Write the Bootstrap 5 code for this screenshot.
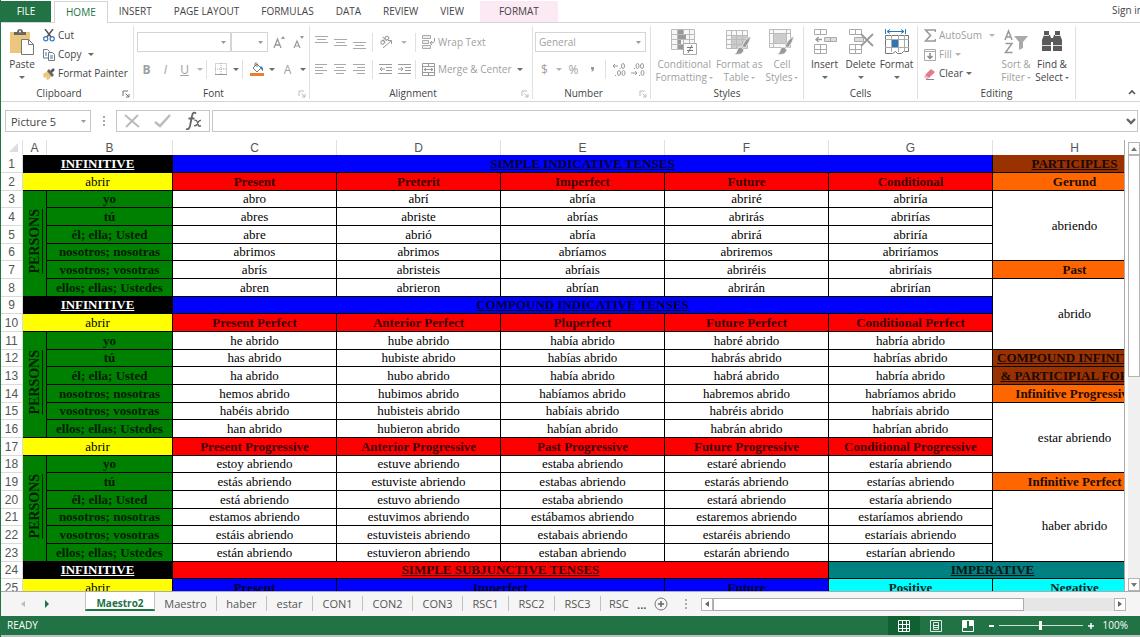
<!DOCTYPE html>
<html lang="en">
<head>
<meta charset="utf-8">
<meta name="viewport" content="width=device-width, initial-scale=1">
<title>Spanish verb conjugations</title>
<link href="https://cdn.jsdelivr.net/npm/bootstrap@5.3.0/dist/css/bootstrap.min.css" rel="stylesheet">
<style>
:root { --xl: #217346; --ink: #444; --off: #a0a0a0; --line: #d5d5d5; }
body { font-family: "Open Sans", "Noto Sans", sans-serif; font-size: 10px; line-height: 13px; color: var(--ink); background: #fff; border-left: 1px solid var(--xl); }
button { font: inherit; color: inherit; background: none; border: 0; padding: 0; white-space: nowrap; }
button:disabled, .off { color: var(--off); }
svg { display: block; flex: none; }

/* ribbon tabs */
.tabs { height: 23px; border-bottom: 1px solid var(--line); }
.tabs .nav-link { height: 21px; padding: 0 11px; line-height: 21px; color: var(--ink); border-radius: 0; }
.tabs .file { background: var(--xl); color: #fff; width: 50px; padding: 0; text-align: center; margin-right: 3px; }
.tabs .home { height: 22px; border: 1px solid var(--line); border-bottom: 0; background: #fff; color: var(--xl); margin-bottom: -1px; }
.tabs .format { background: #fbeaf4; width: 78px; text-align: center; padding: 0; margin-left: 5px; }
.signin { width: 28px; height: 20px; line-height: 17px; overflow: hidden; white-space: nowrap; color: var(--ink); text-decoration: none; }

/* ribbon groups */
.ribbon { height: 79px; border-bottom: 1px solid var(--line); padding: 3px 0 2px; }
.grp { border-right: 1px solid #e1e1e1; flex: none; display: flex; flex-direction: column; position: relative; }
.grp > .body { height: 62px; }
.grp > .cap { text-align: center; line-height: 12px; }
.launch { position: absolute; right: 3px; bottom: 1px; width: 8px; height: 8px; }
.caret { width: 0; height: 0; border: 3px solid transparent; border-top-color: currentColor; border-bottom: 0; flex: none; opacity: .8; }
.big { display: flex; flex-direction: column; align-items: center; line-height: 13px; padding-top: 3px; }
.big svg { margin-bottom: 3px; }
.big .caret { margin-top: 5px; }
.big .inl { margin: 0 0 0 2px; display: inline-block; vertical-align: middle; border-width: 2px; border-bottom: 0; }
.row1, .row2 { display: flex; align-items: center; height: 20px; }
.row1 { margin: 6px 0 7px; }
.tool { display: flex; align-items: center; justify-content: center; width: 19px; height: 19px; font-size: 12px; }
.drop { width: 17px; height: 19px; display: flex; align-items: center; justify-content: center; }
.vsep { width: 1px; height: 19px; background: #e1e1e1; flex: none; }
.pick { appearance: none; border: 1px solid var(--line); border-radius: 0; height: 20px; padding: 0 3px; font: inherit; color: var(--off); flex: none;
  background: #fff url("data:image/svg+xml,%3Csvg xmlns='http://www.w3.org/2000/svg' width='5' height='3'%3E%3Cpath d='M0 0h5L2.500 3z' fill='%23999'/%3E%3C/svg%3E") no-repeat right 4px center; opacity: 1; }
.small-tool { display: flex; align-items: center; height: 19px; gap: 3px; }
.stack { display: flex; flex-direction: column; align-items: start; }

/* formula bar */
.formula { height: 38px; padding: 8px 2px 0 4px; }
.pick.namebox { width: 86px; height: 22px; font-size: 11px; color: var(--ink); padding: 0 5px; border-color: #c6c6c6; }
.fxbox { width: 94px; height: 22px; border: 1px solid #c6c6c6; }
.entry { height: 22px; border: 1px solid #c6c6c6; min-width: 0; }
.entry input { border: 0; outline: 0; height: 20px; padding: 0 4px; min-width: 0; }

/* worksheet */
.sheet { min-height: 0; overflow: hidden; border-bottom: 1px solid #ababab; }
.cells { overflow: hidden; min-width: 0; border-right: 1px solid #ababab; margin-right: 3px; }
.grid { table-layout: fixed; width: 1156px; border-collapse: separate; border-spacing: 0; font: 13px/16px "Liberation Serif", "Times New Roman", serif; color: #000; text-align: center; }
.grid td, .grid tbody th { height: 18px; padding: 0; border-right: 1px solid #000; border-bottom: 1px solid #000; white-space: nowrap; overflow: hidden; line-height: 16px; }
.grid tr:nth-child(3n) > * { height: 17px; }
.grid thead th, .grid tbody th { font: 12px/14px "Liberation Sans", Arial, sans-serif; color: #555; }
.grid thead th { height: 15px; padding: 0; border-right: 1px solid #e1e1e1; }
.grid tbody th { border-color: #dadada; }
.grid .k { background: #000; color: #fff; font-weight: 700; text-decoration: underline; }
.grid .y { background: #ff0; }
.grid .b, .grid .r, .grid .g, .grid .o, .grid .n, .grid .t, .grid .c { font-weight: 700; }
.grid .b { background: #00f; color: #00002c; }
.grid .r { background: #f00; color: #3c0000; }
.grid .g { background: #008000; color: #001c00; }
.grid .o { background: #f60; color: #200c00; }
.grid .n { background: #993200; color: #1c0800; text-decoration: underline; }
.grid .t { background: #008080; color: #001414; text-decoration: underline; }
.grid .c { background: #0ff; color: #002828; }
.grid .u { text-decoration: underline; }
.grid .v span { writing-mode: vertical-rl; transform: rotate(180deg); font-size: 14px; text-decoration: underline; line-height: 20px; }

/* scrollbars */
.vbar { width: 12px; margin-top: 2px; background: #f0f0f0; flex: none; }
.sbtn { width: 12px; height: 13px; border: 1px solid #b5b5b5; background: #fff; display: flex; align-items: center; justify-content: center; flex: none; }
.vthumb { height: 222px; border: 1px solid #b5b5b5; background: #fff; }
.hbar { width: 425px; background: #e6e6e6; margin-right: 14px; }
.hthumb { width: 311px; border: 1px solid #ababab; background: #fff; }

/* sheet tabs */
.sheets { height: 24px; background: #f5f5f5; font-size: 11px; }
.sheets .tab { height: 15px; margin-top: 4px; padding: 0; line-height: 15px; text-align: center; color: #555; text-decoration: none; border-right: 1px solid #c0c0c0; overflow: hidden; flex: none; }
.sheets .tab.active { width: 70px; height: 19px; margin-top: 0; line-height: 23px; font-weight: 700; font-size: 10px; color: var(--xl); background: #fff; border-left: 1px solid #c0c0c0; border-bottom: 2px solid var(--xl); }
.w46 { width: 46px; } .w50 { width: 50px; } .w62 { width: 62px; } .w30 { width: 28px; }

/* status bar */
.status { height: 19px; background: var(--xl); color: #fff; }
.status .view { width: 32px; height: 19px; display: flex; align-items: center; justify-content: center; }
.status .view.on { background: #0f6131; }
.zoom { appearance: none; width: 84px; height: 11px; background: linear-gradient(#cfe0d6, #cfe0d6) center / 100% 1px no-repeat; }
.zoom::-webkit-slider-thumb { appearance: none; width: 3px; height: 9px; background: #fff; }
.edge { height: 2px; background: #b9c4be; }
</style>
</head>
<body class="d-flex flex-column vh-100 overflow-hidden">

<nav class="tabs nav flex-nowrap align-items-end flex-shrink-0" aria-label="Ribbon tabs">
  <a class="nav-link file" href="#">FILE</a>
  <a class="nav-link home" href="#">HOME</a>
  <a class="nav-link" href="#">INSERT</a>
  <a class="nav-link" href="#">PAGE LAYOUT</a>
  <a class="nav-link" href="#">FORMULAS</a>
  <a class="nav-link" href="#">DATA</a>
  <a class="nav-link" href="#">REVIEW</a>
  <a class="nav-link" href="#">VIEW</a>
  <a class="nav-link format" href="#">FORMAT</a>
  <a class="signin ms-auto" href="#">Sign in</a>
</nav>

<section class="ribbon d-flex flex-shrink-0" aria-label="Home">
  <div class="grp" style="width:133px">
    <div class="body d-flex">
      <button class="big ms-2">
        <svg width="26" height="26" viewBox="0 0 26 26"><path d="M1 3h20v21H1z" fill="#ecc67a"/><path d="M5 6V3h3c0-4 6-4 6 0h3v3z" fill="#666"/><circle cx="11" cy="2.500" r="1" fill="#fff"/><path d="M12.500 10.500h7l5 5v10h-12z" fill="#fff" stroke="#777"/><path d="M19.500 10.500v5h5" fill="none" stroke="#777"/></svg>
        Paste<span class="caret"></span>
      </button>
      <div class="stack ms-2">
        <button class="small-tool"><svg width="12" height="13" viewBox="0 0 12 13"><path d="M2 0l6 8M10 0L4 8" stroke="#555" stroke-width="1.500"/><circle cx="2.700" cy="9.800" r="2.100" fill="none" stroke="#3b78b8" stroke-width="1.200"/><circle cx="9.200" cy="9.800" r="2.100" fill="none" stroke="#3b78b8" stroke-width="1.200"/></svg>Cut</button>
        <button class="small-tool"><svg width="12" height="12" viewBox="0 0 12 12"><path d="M.5.5h4l2 2V9h-6z" fill="#fff" stroke="#777"/><path d="M5.500 3.500h4l2 2v6h-6z" fill="#fff" stroke="#777"/><path d="M7 7h3M7 9h3M2 4h2M2 6h2" stroke="#3b78b8"/></svg>Copy<span class="caret ms-1"></span></button>
        <button class="small-tool"><svg width="12" height="12" viewBox="0 0 12 12"><path d="M0 6l5-3 4 5-4 4-2-1 1-2-3 1z" fill="#ecc67a"/><path d="M4 3l2-2 5 6-2 2z" fill="#666"/><path d="M8 4l3-3" stroke="#555" stroke-width="2.500"/></svg>Format Painter</button>
      </div>
    </div>
    <div class="cap me-3">Clipboard</div>
    <svg class="launch" viewBox="0 0 8 8"><path d="M1 6V1h5M3.500 3.500L7 7M7 4v3H4" fill="none" stroke="#777"/></svg>
  </div>

  <div class="grp" style="width:176px">
    <div class="body" style="padding-left:3px">
      <div class="row1">
        <select class="pick" style="width:94px" aria-label="Font" disabled><option></option></select>
        <select class="pick" style="width:37px" aria-label="Font size" disabled><option></option></select>
        <button class="tool" style="margin-left:2px" disabled aria-label="Increase font size"><svg width="13" height="14" viewBox="0 0 13 14"><path d="M1 13L4.500 4 8 13M2.500 10h4" fill="none" stroke="#999" stroke-width="1.300"/><path d="M8 4l2-3 2 3z" fill="#999"/></svg></button>
        <button class="tool" disabled aria-label="Decrease font size"><svg width="12" height="14" viewBox="0 0 12 14"><path d="M1 13l3-7 3 7M2.500 11h3" fill="none" stroke="#999" stroke-width="1.200"/><path d="M7 1h4L9 4z" fill="#999"/></svg></button>
      </div>
      <div class="row2">
        <button class="tool fw-bold" disabled>B</button>
        <button class="tool fst-italic" disabled>I</button>
        <button class="tool text-decoration-underline" disabled>U</button>
        <span class="drop off" style="width:12px"><span class="caret"></span></span>
        <span class="vsep"></span>
        <button class="tool ms-1" disabled aria-label="Borders"><svg width="12" height="12" viewBox="0 0 12 12"><path d="M.5.5h11v11H.5zM6 0v12M0 6h12" fill="none" stroke="#aaa" stroke-dasharray="1 1"/><path d="M0 11.500h12" stroke="#999"/></svg></button>
        <span class="drop" style="width:12px"><span class="caret"></span></span>
        <span class="vsep"></span>
        <button class="tool ms-1" aria-label="Fill color"><svg width="14" height="14" viewBox="0 0 14 14"><path d="M3 6l4-4 4 4-4 4z" fill="#fff" stroke="#777"/><path d="M5 4V1.500q1.500-1.500 2 0V5" fill="none" stroke="#777"/><path d="M10 4q4 1 3 5-2-1-2-3z" fill="#3b78b8"/><path d="M0 11h14v3H0z" fill="#ed7d31"/></svg></button>
        <span class="drop" style="width:12px"><span class="caret"></span></span>
        <button class="tool" disabled>A</button>
        <span class="drop" style="width:12px"><span class="caret"></span></span>
      </div>
    </div>
    <div class="cap me-3">Font</div>
    <svg class="launch" viewBox="0 0 8 8"><path d="M1 6V1h5M3.500 3.500L7 7M7 4v3H4" fill="none" stroke="#bbb"/></svg>
  </div>

  <div class="grp" style="width:223px">
    <div class="body" style="padding-left:2px">
      <div class="row1">
        <button class="tool" disabled aria-label="Top align"><svg width="13" height="14" viewBox="0 0 13 14"><path d="M0 1.500h13M2 4.500h9M0 7.500h13" stroke="#aaa"/></svg></button>
        <button class="tool" disabled aria-label="Middle align"><svg width="13" height="14" viewBox="0 0 13 14"><path d="M0 4.500h13M2 7.500h9M0 10.500h13" stroke="#aaa"/></svg></button>
        <button class="tool" disabled aria-label="Bottom align"><svg width="13" height="14" viewBox="0 0 13 14"><path d="M0 7.500h13M2 10.500h9M0 13.500h13" stroke="#aaa"/></svg></button>
        <span class="vsep" style="margin:0 3px"></span>
        <button class="tool" disabled aria-label="Orientation"><svg width="14" height="14" viewBox="0 0 14 14"><g transform="rotate(-45 5 6)" fill="none" stroke="#999"><circle cx="3" cy="6" r="1.800"/><path d="M5 4v4M7 2v6"/><circle cx="9" cy="6" r="1.800"/></g><path d="M4 13l8-7M9 5.500h3.500V9" fill="none" stroke="#999"/></svg></button>
        <span class="drop off"><span class="caret"></span></span>
        <span class="vsep" style="margin:0 6px 0 3px"></span>
        <button class="small-tool" disabled><svg width="13" height="14" viewBox="0 0 13 14"><path d="M.5.500h8v3h-8zM.5 5.500h6v3h-6zM.5 10.500h8v3h-8z" fill="#eee" stroke="#aaa"/><path d="M12.500 3v3q0 2-4 2M10 6L8 8l2 2" fill="none" stroke="#999"/></svg>Wrap Text</button>
      </div>
      <div class="row2">
        <button class="tool" disabled aria-label="Align left"><svg width="13" height="10" viewBox="0 0 13 10"><path d="M0 .5h12M0 3.500h8M0 6.500h12M0 9.500h8" stroke="#aaa"/></svg></button>
        <button class="tool" disabled aria-label="Center"><svg width="13" height="10" viewBox="0 0 13 10"><path d="M0 .5h12M2 3.500h8M0 6.500h12M2 9.500h8" stroke="#aaa"/></svg></button>
        <button class="tool" disabled aria-label="Align right"><svg width="13" height="10" viewBox="0 0 13 10"><path d="M0 .5h12M4 3.500h8M0 6.500h12M4 9.500h8" stroke="#aaa"/></svg></button>
        <span class="vsep" style="margin:0 3px"></span>
        <button class="tool" disabled aria-label="Decrease indent"><svg width="14" height="10" viewBox="0 0 14 10"><path d="M0 .5h13M7 3.500h6M7 6.500h6M0 9.500h13M6 5H1M3 3L1 5l2 2" fill="none" stroke="#999"/></svg></button>
        <button class="tool" disabled aria-label="Increase indent"><svg width="14" height="10" viewBox="0 0 14 10"><path d="M0 .5h13M7 3.500h6M7 6.500h6M0 9.500h13M0 5h5M3 3l2 2-2 2" fill="none" stroke="#999"/></svg></button>
        <span class="vsep" style="margin:0 6px 0 1px"></span>
        <button class="small-tool" disabled><svg width="13" height="13" viewBox="0 0 13 13"><path d="M.5.500h12v12H.5zM0 3.500h13M0 9.500h13M6.500 0v3M6.500 10v3M2 6.500h9M4 5L2 6.500 4 8M9 5l2 1.500L9 8" fill="none" stroke="#999"/></svg>Merge &amp; Center</button>
        <span class="drop"><span class="caret"></span></span>
      </div>
    </div>
    <div class="cap me-3">Alignment</div>
    <svg class="launch" viewBox="0 0 8 8"><path d="M1 6V1h5M3.500 3.500L7 7M7 4v3H4" fill="none" stroke="#bbb"/></svg>
  </div>

  <div class="grp" style="width:118px">
    <div class="body" style="padding-left:2px">
      <div class="row1">
        <select class="pick" style="width:111px" aria-label="Number format" disabled><option>General</option></select>
      </div>
      <div class="row2">
        <button class="tool" disabled>$</button>
        <span class="drop off" style="width:10px"><span class="caret"></span></span>
        <button class="tool" disabled>%</button>
        <button class="tool fw-bold" disabled aria-label="Comma style"><svg width="5" height="6" viewBox="0 0 5 6"><path d="M1 1h3v2q0 2-2.500 3L2 3.500H1z" fill="#999"/></svg></button>
        <span class="vsep" style="margin:0 3px"></span>
        <button class="tool" disabled aria-label="Increase decimal"><svg width="14" height="13" viewBox="0 0 14 13"><path d="M6 3H1M3 1L1 3l2 2" fill="none" stroke="#999"/><g fill="none" stroke="#999"><ellipse cx="11" cy="3" rx="1.500" ry="2.500"/><ellipse cx="7" cy="10" rx="1.500" ry="2.500"/><ellipse cx="11.500" cy="10" rx="1.500" ry="2.500"/><path d="M7.500 5.500h1M3 12.500h1"/></g></svg></button>
        <button class="tool" disabled aria-label="Decrease decimal"><svg width="14" height="13" viewBox="0 0 14 13"><path d="M0 10h6M4 8l2 2-2 2" fill="none" stroke="#999"/><g fill="none" stroke="#999"><ellipse cx="6.500" cy="3" rx="1.500" ry="2.500"/><ellipse cx="11" cy="3" rx="1.500" ry="2.500"/><ellipse cx="11.500" cy="10" rx="1.500" ry="2.500"/><path d="M3 5.500h1M8 12.500h1"/></g></svg></button>
      </div>
    </div>
    <div class="cap me-3">Number</div>
    <svg class="launch" viewBox="0 0 8 8"><path d="M1 6V1h5M3.500 3.500L7 7M7 4v3H4" fill="none" stroke="#bbb"/></svg>
  </div>

  <div class="grp" style="width:153px">
    <div class="body d-flex justify-content-center" style="gap:3px">
      <button class="big" disabled><svg width="26" height="26" viewBox="0 0 26 26"><path d="M.5.500h23v20H.5zM0 5.500h24M0 10.500h24M0 15.500h24M6.500 0v21M12.500 0v21M18.500 0v21" fill="#f6f6f6" stroke="#bbb"/><path d="M7 1h5v4H7zM7 6h8v4H7zM7 11h3v4H7zM7 16h5v4H7z" fill="#999"/><path d="M12.500 14.500h13v11h-13z" fill="#fff" stroke="#aaa"/><path d="M16 18.500h6M16 21.500h6M21 16l-4 8" stroke="#777"/></svg>Conditional<span>Formatting<i class="caret inl"></i></span></button>
      <button class="big" disabled><svg width="26" height="26" viewBox="0 0 26 26"><path d="M.5 1.500h21v18H.5z" fill="#f8f8f8" stroke="#bbb"/><path d="M6 7h15v12H6z" fill="#ccc"/><path d="M0 6.500h22M0 10.500h22M0 15.500h22M5.500 1v19M10.500 1v19M16.500 1v19" stroke="#bbb"/><path d="M25 7q-6 3-9 10l3 2q5-6 6-12zM15 18q-4 0-4 4 0 2-3 3 8 2 10-4z" fill="#999" stroke="#fff" stroke-width=".7"/></svg>Format as<span>Table<i class="caret inl"></i></span></button>
      <button class="big" disabled><svg width="26" height="26" viewBox="0 0 26 26"><path d="M.5.500h21v18H.5zM0 4.500h22M0 14.500h22M4.500 0v19M17.500 0v19" fill="#f8f8f8" stroke="#bbb"/><path d="M5 5h12v9H5z" fill="#ccc"/><path d="M25 7q-6 3-9 10l3 2q5-6 6-12zM15 18q-4 0-4 4 0 2-3 3 8 2 10-4z" fill="#999" stroke="#fff" stroke-width=".7"/></svg>Cell<span>Styles<i class="caret inl"></i></span></button>
    </div>
    <div class="cap">Styles</div>
  </div>

  <div class="grp" style="width:114px">
    <div class="body d-flex justify-content-center">
      <button class="big" style="width:36px"><svg width="24" height="26" viewBox="0 0 24 26"><path d="M1.500.5h12v5h-12zM7.500 0v6M1.500 15.500h12v9h-12zM1 20.500h13M7.500 15v10" fill="#fff" stroke="#aaa"/><path d="M11.500 8.500h12v4h-12zM17.500 8v5" fill="#ddd" stroke="#aaa"/><path d="M9 10.500H3M5.500 8L3 10.500 5.500 13" fill="none" stroke="#999" stroke-width="1.300"/></svg>Insert<span class="caret"></span></button>
      <button class="big" style="width:36px"><svg width="26" height="26" viewBox="0 0 26 26"><path d="M1.500.5h12v5h-12zM7.500 0v6M1.500 15.500h12v9h-12zM1 20.500h13M7.500 15v10" fill="#fff" stroke="#aaa"/><path d="M6.500 8.500h9v4h-9z" fill="#ddd" stroke="#aaa"/><path d="M13 5l12 12M25 5L13 17" stroke="#999" stroke-width="1.800"/></svg>Delete<span class="caret"></span></button>
      <button class="big" style="width:36px"><svg width="26" height="26" viewBox="0 0 26 26"><path d="M1.500 0v5M21.500 0v5M3 2.500h17M6 .5l-3 2 3 2M17 .5l3 2-3 2" fill="none" stroke="#2e75b6"/><path d="M1.500 6.500h23v16h-5l-2 2h-4l-2-2-3 2h-7z" fill="#fff" stroke="#777"/><path d="M1 10.500h24M1 18.500h24M7.500 6v17M14.500 6v17M20.500 6v17" stroke="#aaa"/><path d="M8 11h6v7H8z" fill="#2e75b6"/></svg>Format<span class="caret"></span></button>
    </div>
    <div class="cap">Cells</div>
  </div>

  <div class="grp" style="width:158px">
    <div class="body d-flex" style="padding-left:6px">
      <div class="stack" style="width:74px">
        <button class="small-tool" disabled><svg width="12" height="13" viewBox="0 0 12 13"><path d="M11.500 3V1H1.500l5 5.500-5 5.500h10v-2" fill="none" stroke="#999" stroke-width="1.600"/></svg>AutoSum<span class="caret ms-1"></span></button>
        <button class="small-tool" disabled><svg width="12" height="12" viewBox="0 0 12 12"><path d="M.5.500h11v11H.5zM0 2.500h12" fill="none" stroke="#aaa"/><path d="M6 4v5M3.500 7L6 9.500 8.500 7" fill="none" stroke="#888" stroke-width="1.500"/></svg>Fill<span class="caret"></span></button>
        <button class="small-tool"><svg width="12" height="12" viewBox="0 0 12 12"><path d="M1 7l6-6 4 3-6 6z" fill="#e57a8d"/><path d="M1 7l4 3-1 1H2L0 9z" fill="#f3b9c2"/><path d="M2 11.500h8" stroke="#888"/></svg>Clear<span class="caret"></span></button>
      </div>
      <button class="big" style="width:36px" disabled><svg width="26" height="26" viewBox="0 0 26 26"><path d="M2 11L5.500 2 9 11M3.500 8h4M2.500 14.500H9L2.500 23.500h7" fill="none" stroke="#999" stroke-width="1.500"/><path d="M11 7h14l-5 6v6l-4 2v-8z" fill="#aaa"/></svg>Sort &amp;<span>Filter<i class="caret inl"></i></span></button>
      <button class="big" style="width:36px"><svg width="24" height="26" viewBox="0 0 24 26"><path d="M4 2h5v4h1l1 3h2l1-3h1V2h5v4l2 5v11h-9v-9h-2v9H2V11l2-5z" fill="#5a5a5a"/><path d="M4 6.500h5M15 6.500h5M2 16.500h9M13 16.500h9" stroke="#ddd"/></svg>Find &amp;<span>Select<i class="caret inl"></i></span></button>
    </div>
    <div class="cap">Editing</div>
  </div>
  <button class="ms-auto align-self-end me-1 pb-1" aria-label="Collapse ribbon"><svg width="8" height="6" viewBox="0 0 8 6"><path d="M1 5l3-3 3 3" fill="none" stroke="#555" stroke-width="1.600"/></svg></button>
</section>

<div class="formula d-flex flex-shrink-0">
  <select class="pick namebox" aria-label="Name box"><option>Picture 5</option></select>
  <svg class="mx-2" width="9" height="22" viewBox="0 0 9 22"><path d="M4 6h2v2H4zM4 10h2v2H4zM4 14h2v2H4z" fill="#aaa"/></svg>
  <div class="fxbox d-flex align-items-center justify-content-around">
    <button disabled aria-label="Cancel"><svg width="16" height="14" viewBox="0 0 16 14"><path d="M1 1l14 12M14 1L2 13" stroke="#bbb" stroke-width="2"/></svg></button>
    <button disabled aria-label="Enter"><svg width="17" height="14" viewBox="0 0 17 14"><path d="M1 8l5 4L16 1" fill="none" stroke="#bbb" stroke-width="2.500"/></svg></button>
    <button aria-label="Insert function"><svg width="17" height="20" viewBox="0 0 17 20"><path d="M11 2.500Q8 0 7 5L5 15q-1 4-4 3M3.500 7.500h6" fill="none" stroke="#666" stroke-width="1.800"/><path d="M9.500 9.500q2-1 3 2l1 3q1 1.500 2.500 0M16 9.500q-1.500-.5-3 2l-1 2q-1.500 2-3 1" fill="none" stroke="#666" stroke-width="1.400"/></svg></button>
  </div>
  <div class="entry d-flex flex-grow-1 align-items-center" style="margin-left:2px">
    <input class="flex-grow-1" type="text" aria-label="Formula">
    <button aria-label="Expand formula bar"><svg width="11" height="7" viewBox="0 0 11 7"><path d="M1 1l4 4 4-4" fill="none" stroke="#666" stroke-width="2.400"/></svg></button>
  </div>
</div>

<main class="sheet d-flex flex-grow-1">
  <div class="cells flex-grow-1">
  <table class="grid">
    <colgroup><col style="width:22px"><col style="width:24px"><col style="width:126px"><col><col><col><col><col><col></colgroup>
    <thead><tr><th scope="col"><svg class="ms-auto me-1" width="9" height="9" viewBox="0 0 9 9"><path d="M9 0v9H0z" fill="#ddd"/></svg></th><th scope="col">A</th><th scope="col">B</th><th scope="col">C</th><th scope="col">D</th><th scope="col">E</th><th scope="col">F</th><th scope="col">G</th><th scope="col">H</th></tr></thead>
    <tbody>
    <tr><th scope="row">1</th><td class="k" colspan="2">INFINITIVE</td><td class="b u" colspan="5">SIMPLE INDICATIVE TENSES</td><td class="n">PARTICIPLES</td></tr>
    <tr><th scope="row">2</th><td class="y" colspan="2">abrir</td><td class="r">Present</td><td class="r">Preterit</td><td class="r">Imperfect</td><td class="r">Future</td><td class="r">Conditional</td><td class="o">Gerund</td></tr>
    <tr><th scope="row">3</th><td class="g v" rowspan="6"><span>PERSONS</span></td><td class="g">yo</td><td>abro</td><td>abrí</td><td>abría</td><td>abriré</td><td>abriría</td><td rowspan="4">abriendo</td></tr>
    <tr><th scope="row">4</th><td class="g">tú</td><td>abres</td><td>abriste</td><td>abrías</td><td>abrirás</td><td>abrirías</td></tr>
    <tr><th scope="row">5</th><td class="g">él; ella; Usted</td><td>abre</td><td>abrió</td><td>abría</td><td>abrirá</td><td>abriría</td></tr>
    <tr><th scope="row">6</th><td class="g">nosotros; nosotras</td><td>abrimos</td><td>abrimos</td><td>abríamos</td><td>abriremos</td><td>abriríamos</td></tr>
    <tr><th scope="row">7</th><td class="g">vosotros; vosotras</td><td>abrís</td><td>abristeis</td><td>abríais</td><td>abriréis</td><td>abriríais</td><td class="o">Past</td></tr>
    <tr><th scope="row">8</th><td class="g">ellos; ellas; Ustedes</td><td>abren</td><td>abrieron</td><td>abrían</td><td>abrirán</td><td>abrirían</td><td rowspan="4">abrido</td></tr>
    <tr><th scope="row">9</th><td class="k" colspan="2">INFINITIVE</td><td class="b u" colspan="5">COMPOUND INDICATIVE TENSES</td></tr>
    <tr><th scope="row">10</th><td class="y" colspan="2">abrir</td><td class="r">Present Perfect</td><td class="r">Anterior Perfect</td><td class="r">Pluperfect</td><td class="r">Future Perfect</td><td class="r">Conditional Perfect</td></tr>
    <tr><th scope="row">11</th><td class="g v" rowspan="6"><span>PERSONS</span></td><td class="g">yo</td><td>he abrido</td><td>hube abrido</td><td>había abrido</td><td>habré abrido</td><td>habría abrido</td></tr>
    <tr><th scope="row">12</th><td class="g">tú</td><td>has abrido</td><td>hubiste abrido</td><td>habías abrido</td><td>habrás abrido</td><td>habrías abrido</td><td class="n">COMPOUND INFINITIVE</td></tr>
    <tr><th scope="row">13</th><td class="g">él; ella; Usted</td><td>ha abrido</td><td>hubo abrido</td><td>había abrido</td><td>habrá abrido</td><td>habría abrido</td><td class="n">&amp; PARTICIPIAL FORMS</td></tr>
    <tr><th scope="row">14</th><td class="g">nosotros; nosotras</td><td>hemos abrido</td><td>hubimos abrido</td><td>habíamos abrido</td><td>habremos abrido</td><td>habríamos abrido</td><td class="o">Infinitive Progressive</td></tr>
    <tr><th scope="row">15</th><td class="g">vosotros; vosotras</td><td>habéis abrido</td><td>hubisteis abrido</td><td>habíais abrido</td><td>habréis abrido</td><td>habríais abrido</td><td rowspan="4">estar abriendo</td></tr>
    <tr><th scope="row">16</th><td class="g">ellos; ellas; Ustedes</td><td>han abrido</td><td>hubieron abrido</td><td>habían abrido</td><td>habrán abrido</td><td>habrían abrido</td></tr>
    <tr><th scope="row">17</th><td class="y" colspan="2">abrir</td><td class="r">Present Progressive</td><td class="r">Anterior Progressive</td><td class="r">Past Progressive</td><td class="r">Future Progressive</td><td class="r">Conditional Progressive</td></tr>
    <tr><th scope="row">18</th><td class="g v" rowspan="6"><span>PERSONS</span></td><td class="g">yo</td><td>estoy abriendo</td><td>estuve abriendo</td><td>estaba abriendo</td><td>estaré abriendo</td><td>estaría abriendo</td></tr>
    <tr><th scope="row">19</th><td class="g">tú</td><td>estás abriendo</td><td>estuviste abriendo</td><td>estabas abriendo</td><td>estarás abriendo</td><td>estarías abriendo</td><td class="o">Infinitive Perfect</td></tr>
    <tr><th scope="row">20</th><td class="g">él; ella; Usted</td><td>está abriendo</td><td>estuvo abriendo</td><td>estaba abriendo</td><td>estará abriendo</td><td>estaría abriendo</td><td rowspan="4">haber abrido</td></tr>
    <tr><th scope="row">21</th><td class="g">nosotros; nosotras</td><td>estamos abriendo</td><td>estuvimos abriendo</td><td>estábamos abriendo</td><td>estaremos abriendo</td><td>estaríamos abriendo</td></tr>
    <tr><th scope="row">22</th><td class="g">vosotros; vosotras</td><td>estáis abriendo</td><td>estuvisteis abriendo</td><td>estabais abriendo</td><td>estaréis abriendo</td><td>estaríais abriendo</td></tr>
    <tr><th scope="row">23</th><td class="g">ellos; ellas; Ustedes</td><td>están abriendo</td><td>estuvieron abriendo</td><td>estaban abriendo</td><td>estarán abriendo</td><td>estarían abriendo</td></tr>
    <tr><th scope="row">24</th><td class="k" colspan="2">INFINITIVE</td><td class="r u" colspan="4">SIMPLE SUBJUNCTIVE TENSES</td><td class="t" colspan="2">IMPERATIVE</td></tr>
    <tr><th scope="row">25</th><td class="y" colspan="2">abrir</td><td class="b">Present</td><td class="b" colspan="2">Imperfect</td><td class="b">Future</td><td class="c">Positive</td><td class="c">Negative</td></tr>
    </tbody>
  </table>
  </div>
  <div class="vbar d-flex flex-column">
    <button class="sbtn" aria-label="Scroll up"><svg width="6" height="4" viewBox="0 0 6 4"><path d="M3 0l3 4H0z" fill="#777"/></svg></button>
    <div class="vthumb"></div>
    <button class="sbtn mt-auto" aria-label="Scroll down"><svg width="6" height="4" viewBox="0 0 6 4"><path d="M0 0h6L3 4z" fill="#777"/></svg></button>
  </div>
</main>

<nav class="sheets d-flex flex-shrink-0" aria-label="Sheets">
  <div class="d-flex align-items-center justify-content-center gap-3 flex-shrink-0" style="width:84px">
    <button disabled aria-label="Previous sheet"><svg width="8" height="8" viewBox="0 0 8 8"><path d="M6 1v6L2 4z" fill="#bbb"/></svg></button>
    <button class="me-3" aria-label="Next sheet"><svg width="8" height="8" viewBox="0 0 8 8"><path d="M2 0v8l4-4z" fill="#217346"/></svg></button>
  </div>
  <a class="tab active" href="#">Maestro2</a>
  <a class="tab w62" href="#">Maestro</a>
  <a class="tab w50" href="#">haber</a>
  <a class="tab w46" href="#">estar</a>
  <a class="tab w50" href="#">CON1</a>
  <a class="tab w50" href="#">CON2</a>
  <a class="tab w50" href="#">CON3</a>
  <a class="tab w46" href="#">RSC1</a>
  <a class="tab w46" href="#">RSC2</a>
  <a class="tab w46" href="#">RSC3</a>
  <a class="tab w30 ps-2 border-0 text-start" href="#">RSC</a>
  <button class="fw-bold ms-2" style="color:#217346">...</button>
  <button class="ms-2 me-3" aria-label="New sheet"><svg width="14" height="14" viewBox="0 0 14 14"><circle cx="7" cy="7" r="6" fill="none" stroke="#777"/><path d="M7 4v6M4 7h6" stroke="#666" stroke-width="1.500"/></svg></button>
  <svg class="align-self-center" width="4" height="12" viewBox="0 0 4 12"><path d="M1 1h2v2H1zM1 5h2v2H1zM1 9h2v2H1z" fill="#aaa"/></svg>
  <div class="hbar d-flex ms-auto align-self-center">
    <button class="sbtn" aria-label="Scroll left"><svg width="4" height="6" viewBox="0 0 4 6"><path d="M4 0v6L0 3z" fill="#666"/></svg></button>
    <div class="hthumb"></div>
    <button class="sbtn ms-auto" aria-label="Scroll right"><svg width="4" height="6" viewBox="0 0 4 6"><path d="M0 0v6l4-3z" fill="#666"/></svg></button>
  </div>
</nav>

<footer class="status d-flex align-items-center flex-shrink-0">
  <span style="margin-left:6px">READY</span>
  <button class="view on ms-auto" aria-label="Normal view"><svg width="12" height="12" viewBox="0 0 12 12"><path d="M.5.500h11v11H.5zM0 4.500h12M0 8.500h12M4.500 0v12M8.500 0v12" fill="none" stroke="#fff"/></svg></button>
  <button class="view" aria-label="Page layout view"><svg width="12" height="12" viewBox="0 0 12 12"><path d="M.5.500h11v11H.5zM3.500 2.500h5v7h-5zM4 5.500h4M4 7.500h4" fill="none" stroke="#dfeae4"/></svg></button>
  <button class="view" aria-label="Page break preview"><svg width="12" height="12" viewBox="0 0 12 12"><path d="M.5.500h11v11H.5z" fill="none" stroke="#fff"/><path d="M1 1h4v7H1zM7 1h4v5H7z" fill="#fff"/></svg></button>
  <button class="ms-1" aria-label="Zoom out"><svg width="7" height="8" viewBox="0 0 7 8"><path d="M1 4h5" stroke="#fff" stroke-width="2"/></svg></button>
  <input class="zoom mx-1" type="range" min="10" max="190" value="100" aria-label="Zoom">
  <button class="me-2" aria-label="Zoom in"><svg width="8" height="8" viewBox="0 0 8 8"><path d="M1 4h6M4 1v6" stroke="#fff" stroke-width="1.500"/></svg></button>
  <span class="me-2 pe-1">100%</span>
</footer>
<div class="edge flex-shrink-0"></div>

<script src="https://cdn.jsdelivr.net/npm/bootstrap@5.3.0/dist/js/bootstrap.bundle.min.js"></script>
</body>
</html>
